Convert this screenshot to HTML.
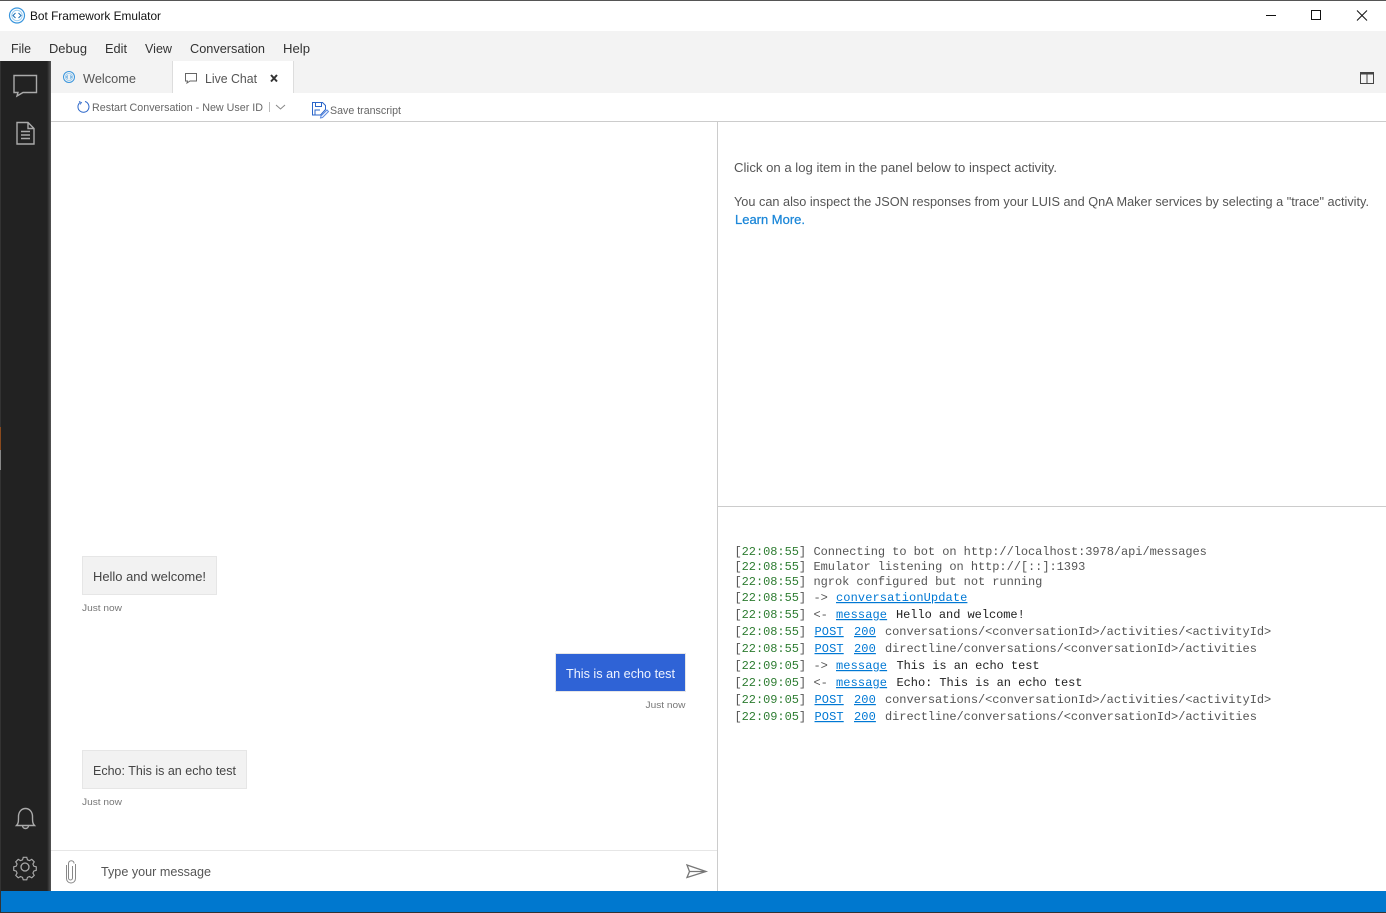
<!DOCTYPE html>
<html lang="en">
<head>
<meta charset="utf-8">
<title>Bot Framework Emulator</title>
<style>
html,body{margin:0;padding:0;width:1386px;height:913px;overflow:hidden;background:#fff}
svg{display:block;position:absolute;left:0;top:0}
text{font-family:"Liberation Sans",sans-serif;font-size:13px;fill:#333;white-space:pre}
.log text{font-family:"Liberation Mono",monospace;font-size:12px;fill:#555;letter-spacing:-.05px}
.log .t{fill:#555}
.log .g{fill:#2e7d32}
.log .a{fill:#0078d4;text-decoration:underline;letter-spacing:.1px}
.log .k{fill:#222}
</style>
</head>
<body>
<svg width="1386" height="913" viewBox="0 0 1386 913" xmlns="http://www.w3.org/2000/svg">
<defs>
<linearGradient id="sg" x1="0" x2="1" y1="0" y2="0"><stop offset="0" stop-color="#222"/><stop offset="1" stop-color="#555"/></linearGradient>
</defs>
<!-- chrome -->
<rect x="0" y="0" width="1386" height="913" fill="#fff"/>
<rect x="0" y="31" width="1386" height="62" fill="#f3f3f3"/>
<rect x="0" y="0" width="1386" height="1" fill="#555"/>
<!-- title -->
<g fill="none" stroke="#3a96dd" stroke-width="1">
<circle cx="17" cy="15.5" r="7.5" stroke-width="1.2"/>
<circle cx="17" cy="15.5" r="5.2" stroke="#9ccdf0"/>
<path d="M15.5 13l-2.5 2.5 2.5 2.5M18.5 13l2.5 2.5-2.5 2.5" stroke="#1f6fb5"/>
</g>
<text x="30" y="20" style="font-size:12px;fill:#111" textLength="131" lengthAdjust="spacingAndGlyphs">Bot Framework Emulator</text>
<!-- window controls -->
<path d="M1266 15.5h10" stroke="#111" stroke-width="1"/>
<rect x="1311.5" y="10.5" width="9" height="9" fill="none" stroke="#111"/>
<path d="M1357 10.5l10 10M1367 10.5l-10 10" stroke="#111" stroke-width="1"/>
<!-- menu -->
<text x="11" y="53" textLength="20" lengthAdjust="spacingAndGlyphs">File</text>
<text x="49" y="53" textLength="38" lengthAdjust="spacingAndGlyphs">Debug</text>
<text x="105" y="53" textLength="22" lengthAdjust="spacingAndGlyphs">Edit</text>
<text x="145" y="53" textLength="27" lengthAdjust="spacingAndGlyphs">View</text>
<text x="190" y="53" textLength="75" lengthAdjust="spacingAndGlyphs">Conversation</text>
<text x="283" y="53" textLength="27" lengthAdjust="spacingAndGlyphs">Help</text>
<!-- sidebar -->
<rect x="1" y="61" width="50" height="830" fill="#222"/>
<rect x="47" y="61" width="4" height="830" fill="url(#sg)"/>
<rect x="0" y="61" width="1" height="852" fill="#333"/>
<rect x="0" y="427" width="1" height="23" fill="#8a4a1e"/>
<rect x="0" y="450" width="1" height="20" fill="#888"/>
<!-- sidebar icons -->
<path d="M14 75.500h22.500v17H23l-6 3.500 1-3.500h-4z" fill="none" stroke="#aaa" stroke-width="1.400"/>
<path d="M17 122.500h11l6 6v15.500H17zM28 122.500v6h6M21 131.500h9M21 135h9M21 138.500h9" fill="none" stroke="#aaa" stroke-width="1.400"/>
<path d="M16.500 826.500c2-2 2-4 2-9 0-4.500 3-8 7-8s7 3.500 7 8c0 5 0 7 2 9zM22.500 826.500c0 4 6 4 6 0" fill="none" stroke="#aaa" stroke-width="1.400" transform="translate(0 -1)"/>
<g fill="none" stroke="#aaa" stroke-width="1.300">
<circle cx="25" cy="867" r="4"/>
<path d="M23 856l4 0 .8 2.800 2.300 1 2.600-1.500 2.800 2.800-1.500 2.600 1 2.300 2.800.8 0 4-2.800.8-1 2.300 1.500 2.600-2.800 2.800-2.600-1.500-2.300 1-.8 2.800-4 0-.8-2.800-2.300-1-2.600 1.500-2.800-2.800 1.500-2.600-1-2.300-2.800-.8 0-4 2.800-.8 1-2.300-1.500-2.600 2.800-2.800 2.600 1.500 2.300-1z" transform="translate(25 867) scale(.88) translate(-25 -867)"/>
</g>
<!-- tabs -->
<g fill="none" stroke="#3a96dd">
<circle cx="69" cy="77" r="5.500"/>
<circle cx="69" cy="77" r="3.500" stroke="#9ccdf0"/>
<path d="M68 75.500l-1.500 1.500 1.500 1.500M70 75.500l1.500 1.500-1.500 1.500" stroke-width=".8"/>
</g>
<text x="83" y="83" style="fill:#555" textLength="53" lengthAdjust="spacingAndGlyphs">Welcome</text>
<rect x="172" y="61" width="122" height="32" fill="#fff"/>
<rect x="172" y="61" width="1" height="32" fill="#ddd"/>
<rect x="293" y="61" width="1" height="32" fill="#ddd"/>
<path d="M185.500 73.500h11v7.500H190l-3 2 .5-2h-2z" fill="none" stroke="#666"/>
<text x="205" y="83" style="fill:#555" textLength="52" lengthAdjust="spacingAndGlyphs">Live Chat</text>
<path d="M271 75l6 6.500M277 75l-6 6.500" stroke="#333" stroke-width="2"/>
<g fill="none" stroke="#444"><rect x="1360.500" y="72.500" width="13" height="11" stroke-width="1"/><path d="M1360 73.500h14" stroke-width="2"/><path d="M1367 73v11"/></g>
<!-- toolbar -->
<rect x="51" y="121" width="1335" height="1" fill="#ccc"/>
<path d="M80 102.500a5.500 5.500 0 1 0 5-1" fill="none" stroke="#2b66c9" stroke-width="1"/>
<path d="M79 101.500l2.500 1-1.500 2" fill="none" stroke="#2b66c9" stroke-width=".8"/>
<text x="92" y="111" style="font-size:11px;fill:#666" textLength="171" lengthAdjust="spacingAndGlyphs">Restart Conversation - New User ID</text>
<rect x="269" y="102" width="1" height="10" fill="#bbb"/>
<path d="M276 105l4.500 4 4.500-4" fill="none" stroke="#888"/>
<g fill="none" stroke="#2b66c9" stroke-width="1">
<path d="M312.500 102.500h10l3 3v4l-5 5.500h-8z"/><path d="M315.500 102.500v4h6v-4M315 115v-5h5"/><path d="M321 116l6-6 1.500 1.500-6 6-2 .5z" stroke="#5b8ae0"/>
</g>
<text x="330" y="114" style="font-size:11px;fill:#666" textLength="71" lengthAdjust="spacingAndGlyphs">Save transcript</text>
<!-- dividers -->
<rect x="717" y="122" width="1" height="769" fill="#ccc"/>
<rect x="718" y="506" width="668" height="1" fill="#ccc"/>
<!-- inspector -->
<text x="734" y="172" style="font-size:12.500px;fill:#555" textLength="323" lengthAdjust="spacingAndGlyphs">Click on a log item in the panel below to inspect activity.</text>
<text x="734" y="206" style="font-size:12.500px;fill:#555" textLength="635" lengthAdjust="spacingAndGlyphs">You can also inspect the JSON responses from your LUIS and QnA Maker services by selecting a "trace" activity.</text>
<text x="735" y="224" style="font-size:12.500px;fill:#1a86d8;stroke:#1a86d8;stroke-width:.25px" textLength="70" lengthAdjust="spacingAndGlyphs">Learn More.</text>
<!-- chat -->
<rect x="82.500" y="556.500" width="134" height="38" fill="#f2f2f2" stroke="#e6e6e6"/>
<text x="93" y="581" style="fill:#444" textLength="113" lengthAdjust="spacingAndGlyphs">Hello and welcome!</text>
<text x="82" y="611" style="font-size:9.500px;fill:#777" textLength="40" lengthAdjust="spacingAndGlyphs">Just now</text>
<rect x="555.500" y="653.500" width="130" height="38" fill="#2f63d6" stroke="#e6e6e6"/>
<text x="566" y="678" style="fill:#eef3ff" textLength="109" lengthAdjust="spacingAndGlyphs">This is an echo test</text>
<text x="645.500" y="708" style="font-size:9.500px;fill:#777" textLength="40" lengthAdjust="spacingAndGlyphs">Just now</text>
<rect x="82.500" y="750.500" width="164" height="38" fill="#f2f2f2" stroke="#e6e6e6"/>
<text x="93" y="775" style="fill:#444" textLength="143" lengthAdjust="spacingAndGlyphs">Echo: This is an echo test</text>
<text x="82" y="805" style="font-size:9.500px;fill:#777" textLength="40" lengthAdjust="spacingAndGlyphs">Just now</text>
<!-- input -->
<rect x="51" y="850" width="666" height="1" fill="#e6e6e6"/>
<path d="M72.500 866v12a2 2 0 0 1-4 0v-14.500a2.800 2.800 0 0 1 5.600 0" fill="none" stroke="#888" stroke-width="1"/>
<path d="M75.500 864v14.500a4.500 4.500 0 0 1-9 0V865" fill="none" stroke="#888" stroke-width="1"/>
<text x="101" y="876" style="fill:#555" textLength="110" lengthAdjust="spacingAndGlyphs">Type your message</text>
<path d="M687 865l19 6.500L687 877.500l2.500-6zM689.500 871.500h16.500" fill="none" stroke="#777" stroke-width="1.300"/>
<!-- status -->
<rect x="1" y="891" width="1385" height="21" fill="#0078cf"/>
<rect x="0" y="912" width="1386" height="1" fill="#333"/>
<!-- log -->
<g class="log">
<text x="734.500" y="555"><tspan class="t">[</tspan><tspan class="g">22:08:55</tspan><tspan class="t">]</tspan><tspan class="t" x="813.500">Connecting to bot on http://localhost:3978/api/messages</tspan></text>
<text x="734.500" y="570"><tspan class="t">[</tspan><tspan class="g">22:08:55</tspan><tspan class="t">]</tspan><tspan class="t" x="813.500">Emulator listening on http://[::]:1393</tspan></text>
<text x="734.500" y="585"><tspan class="t">[</tspan><tspan class="g">22:08:55</tspan><tspan class="t">]</tspan><tspan class="t" x="813.500">ngrok configured but not running</tspan></text>
<text x="734.500" y="601"><tspan class="t">[</tspan><tspan class="g">22:08:55</tspan><tspan class="t">]</tspan><tspan class="t" x="813.500">-&gt;</tspan><tspan class="a" x="836">conversationUpdate</tspan></text>
<text x="734.500" y="618"><tspan class="t">[</tspan><tspan class="g">22:08:55</tspan><tspan class="t">]</tspan><tspan class="t" x="813.500">&lt;-</tspan><tspan class="a" x="836">message</tspan><tspan class="k" x="896">Hello and welcome!</tspan></text>
<text x="734.500" y="635"><tspan class="t">[</tspan><tspan class="g">22:08:55</tspan><tspan class="t">]</tspan><tspan class="a" x="814.500">POST</tspan><tspan class="a" x="854">200</tspan><tspan class="t" x="885">conversations/&lt;conversationId&gt;/activities/&lt;activityId&gt;</tspan></text>
<text x="734.500" y="652"><tspan class="t">[</tspan><tspan class="g">22:08:55</tspan><tspan class="t">]</tspan><tspan class="a" x="814.500">POST</tspan><tspan class="a" x="854">200</tspan><tspan class="t" x="885">directline/conversations/&lt;conversationId&gt;/activities</tspan></text>
<text x="734.500" y="669"><tspan class="t">[</tspan><tspan class="g">22:09:05</tspan><tspan class="t">]</tspan><tspan class="t" x="813.500">-&gt;</tspan><tspan class="a" x="836">message</tspan><tspan class="k" x="896.500">This is an echo test</tspan></text>
<text x="734.500" y="686"><tspan class="t">[</tspan><tspan class="g">22:09:05</tspan><tspan class="t">]</tspan><tspan class="t" x="813.500">&lt;-</tspan><tspan class="a" x="836">message</tspan><tspan class="k" x="896.500">Echo: This is an echo test</tspan></text>
<text x="734.500" y="703"><tspan class="t">[</tspan><tspan class="g">22:09:05</tspan><tspan class="t">]</tspan><tspan class="a" x="814.500">POST</tspan><tspan class="a" x="854">200</tspan><tspan class="t" x="885">conversations/&lt;conversationId&gt;/activities/&lt;activityId&gt;</tspan></text>
<text x="734.500" y="720"><tspan class="t">[</tspan><tspan class="g">22:09:05</tspan><tspan class="t">]</tspan><tspan class="a" x="814.500">POST</tspan><tspan class="a" x="854">200</tspan><tspan class="t" x="885">directline/conversations/&lt;conversationId&gt;/activities</tspan></text>
</g>
</svg>
</body>
</html>
